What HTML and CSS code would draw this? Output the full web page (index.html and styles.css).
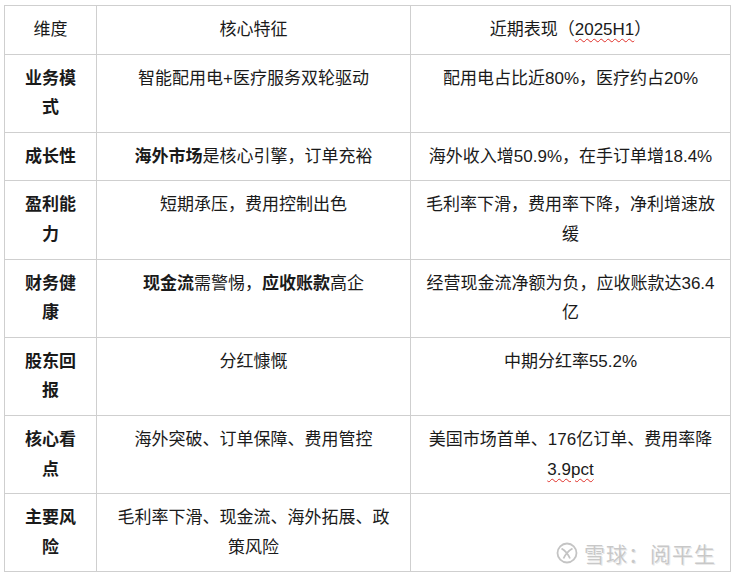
FILE: index.html
```html
<!DOCTYPE html>
<html lang="zh">
<head>
<meta charset="utf-8">
<link rel="stylesheet" href="styles.css">
</head>
<body>
<table class="grid">
  <colgroup>
    <col class="c1">
    <col class="c2">
    <col class="c3">
  </colgroup>
  <thead>
    <tr><th>维度</th><th class="mid">核心特征</th><th class="last">近期表现（<span class="spell">2025H1</span>）</th></tr>
  </thead>
  <tbody>
    <tr><td class="dim">业务模式</td><td class="mid">智能配用电+医疗服务双轮驱动</td><td class="last">配用电占比近80%，医疗约占20%</td></tr>
    <tr><td class="dim">成长性</td><td class="mid"><b>海外市场</b>是核心引擎，订单充裕</td><td class="last">海外收入增50.9%，在手订单增18.4%</td></tr>
    <tr><td class="dim">盈利能力</td><td class="mid">短期承压，费用控制出色</td><td class="last">毛利率下滑，费用率下降，净利增速放缓</td></tr>
    <tr><td class="dim">财务健康</td><td class="mid"><b>现金流</b>需警惕，<b>应收账款</b>高企</td><td class="last">经营现金流净额为负，应收账款达36.4亿</td></tr>
    <tr><td class="dim">股东回报</td><td class="mid">分红慷慨</td><td class="last">中期分红率55.2%</td></tr>
    <tr><td class="dim">核心看点</td><td class="mid">海外突破、订单保障、费用管控</td><td class="last">美国市场首单、176亿订单、费用率降<span class="spell">3.9pct</span></td></tr>
    <tr><td class="dim">主要风险</td><td class="mid">毛利率下滑、现金流、海外拓展、政策风险</td><td class="last"></td></tr>
  </tbody>
</table>
<div class="watermark">
  <svg class="wm-logo" width="22" height="22" viewBox="0 0 22 22">
    <circle cx="11" cy="11" r="9.5" fill="none" stroke="#c4c4c4" stroke-width="1.8"/>
    <path d="M5.5 6.5 C9 8.5 12 12 14 16.5" fill="none" stroke="#c4c4c4" stroke-width="1.8"/>
    <path d="M16.5 6.5 C13 8.5 9.5 12 7.5 16.5" fill="none" stroke="#c4c4c4" stroke-width="1.8"/>
  </svg>
  <span class="wm-text">雪球：阅平生</span>
</div>
</body>
</html>
```
FILE: styles.css
```css
html, body {
  margin: 0;
  padding: 0;
  background: #fff;
}
body {
  font-family: "Liberation Sans", "Noto Sans CJK SC", sans-serif;
  font-size: 17px;
  color: #1a1a1a;
  position: relative;
  width: 737px;
  height: 579px;
  overflow: hidden;
}
.grid {
  border-collapse: collapse;
  table-layout: fixed;
  width: 726px;
  margin: 5px 0 0 4px;
}
.c1 { width: 92px; }
.c2 { width: 314px; }
.c3 { width: 320px; }
.grid th,
.grid td {
  border: 1px solid #cfcfcf;
  text-align: center;
  vertical-align: top;
  line-height: 29.6px;
  padding: 9px 12px;
  font-weight: normal;
}
.grid td.dim {
  font-weight: bold;
  padding: 9px 14px;
}
.grid td.mid {
  padding: 9px 14px;
}
.grid b {
  font-weight: bold;
}
.spell {
  text-decoration: underline wavy #e0302a;
  text-decoration-thickness: 1px;
  text-underline-offset: 3px;
}
.watermark {
  position: absolute;
  left: 556px;
  top: 540px;
  display: flex;
  align-items: center;
  gap: 6px;
}
.wm-logo {
  display: block;
}
.wm-text {
  font-family: "Noto Sans CJK SC", sans-serif;
  font-size: 21px;
  line-height: 26px;
  color: #c8c8c8;
  letter-spacing: 1px;
  text-shadow: 0 0 1px #fff, 1px 1px 0 #e8e8e8;
}
```
